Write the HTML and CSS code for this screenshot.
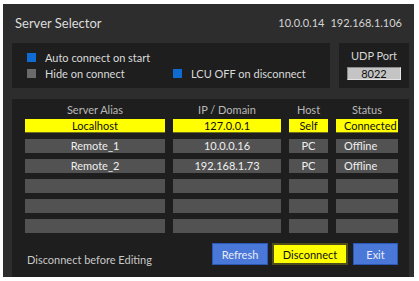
FILE: index.html
```html
<!DOCTYPE html>
<html lang="en">
<head>
    <meta charset="UTF-8">
    <title>Server Selector</title>
    <link rel="stylesheet" href="styles.css">
</head>
<body>
<div class="window">
    <div class="title-bar">
        <span class="title">Server Selector</span>
        <span class="local-ips"><span>10.0.0.14</span><span>192.168.1.106</span></span>
    </div>
    <div class="top-row">
        <div class="panel options">
            <div class="opt-line">
                <label class="check"><i class="box on"></i>Auto connect on start</label>
            </div>
            <div class="opt-line">
                <label class="check wide"><i class="box"></i>Hide on connect</label>
                <label class="check"><i class="box on"></i>LCU OFF on disconnect</label>
            </div>
        </div>
        <div class="panel udp">
            <div class="udp-label">UDP Port</div>
            <div class="udp-input">8022</div>
        </div>
    </div>
    <div class="panel servers">
        <div class="grid">
            <div class="head">Server Alias</div>
            <div class="head">IP / Domain</div>
            <div class="head">Host</div>
            <div class="head">Status</div>

            <div class="cell active">Localhost</div>
            <div class="cell active">127.0.0.1</div>
            <div class="cell active">Self</div>
            <div class="cell active status">Connected</div>

            <div class="cell">Remote_1</div>
            <div class="cell">10.0.0.16</div>
            <div class="cell">PC</div>
            <div class="cell status">Offline</div>

            <div class="cell">Remote_2</div>
            <div class="cell">192.168.1.73</div>
            <div class="cell">PC</div>
            <div class="cell status">Offline</div>

            <div class="cell"></div><div class="cell"></div><div class="cell"></div><div class="cell"></div>
            <div class="cell"></div><div class="cell"></div><div class="cell"></div><div class="cell"></div>
            <div class="cell"></div><div class="cell"></div><div class="cell"></div><div class="cell"></div>
        </div>
        <div class="footer">
            <span class="hint">Disconnect before Editing</span>
            <div class="buttons">
                <button class="btn refresh">Refresh</button>
                <button class="btn disconnect">Disconnect</button>
                <button class="btn exit">Exit</button>
            </div>
        </div>
    </div>
</div>
</body>
</html>
```

FILE: styles.css
```css
*{
    margin: 0;
    padding: 0;
    box-sizing: border-box;
}
body{
    background-color: #ffffff;
    padding: 4px 0 0 3px;
    font-family: Lato, "Noto Sans", sans-serif;
    font-size: 11px;
    color: #e6e6e6;
}
.window{
    width: 411px;
    height: 273px;
    background-color: #2d2d2d;
    display: flex;
    flex-direction: column;
}
.title-bar{
    height: 39px;
    display: flex;
    justify-content: space-between;
    align-items: center;
    padding: 0 12px 2px 12px;
}
.title{
    font-size: 13px;
    color: #dcdcdc;
}
.local-ips{
    display: flex;
    gap: 6px;
    font-size: 11px;
    color: #d4d4d4;
}
.panel{
    background-color: #1e1e1e;
}
.top-row{
    height: 45px;
    display: flex;
    gap: 9px;
    padding-left: 9px;
    padding-right: 5px;
}
.options{
    width: 318px;
    padding: 6px 0 0 15px;
}
.opt-line{
    display: flex;
    height: 16px;
    align-items: center;
}
.check{
    display: flex;
    align-items: center;
    gap: 9px;
    color: #dadada;
}
.check.wide{
    width: 146px;
}
.box{
    width: 9px;
    height: 9px;
    background-color: #6a6a6a;
}
.box.on{
    background-color: #0f6bd1;
}
.udp{
    width: 70px;
    display: flex;
    flex-direction: column;
    align-items: center;
    padding-top: 5px;
}
.udp-label{
    color: #d6d6d6;
    line-height: 16px;
    margin-bottom: 3px;
}
.udp-input{
    width: 54px;
    height: 13px;
    background-color: #c4c4c4;
    border: 1px solid #e4e4e4;
    border-top-color: #8a8a8a;
    border-left-color: #8a8a8a;
    color: #101010;
    text-align: center;
    line-height: 11px;
}
.servers{
    margin: 11px 5px 0 9px;
    flex: 1;
    padding: 0 11px 0 13px;
    display: flex;
    flex-direction: column;
}
.grid{
    display: grid;
    grid-template-columns: 140px 108px 39px 62px;
    grid-auto-rows: 14px;
    column-gap: 8px;
    row-gap: 6px;
}
.head{
    color: #b9b9b9;
    text-align: center;
    line-height: 14px;
    margin-top: 4px;
    height: 14px;
}
.cell{
    background-color: #525252;
    color: #efefef;
    text-align: center;
    line-height: 14px;
    white-space: nowrap;
}
.cell.status{
    text-align: left;
    padding-left: 8px;
}
.cell.active{
    background-color: #ffff00;
    color: #101010;
    border-bottom: 1px solid #6e6e1e;
    line-height: 13px;
}
.footer{
    display: flex;
    justify-content: space-between;
    align-items: flex-end;
    margin-top: 10px;
}
.hint{
    color: #c8c8c8;
    padding-left: 2px;
    line-height: 14px;
    margin-bottom: -2px;
}
.buttons{
    display: flex;
    gap: 4px;
}
.btn{
    height: 22px;
    font-family: inherit;
    font-size: 11px;
    border: 1px solid #2c58b8;
    background-color: #4a78d8;
    color: #e8ecf6;
}
.refresh{
    width: 56px;
}
.disconnect{
    width: 76px;
    background-color: #ffff00;
    border: 2px solid #4e4e1a;
    color: #101010;
}
.exit{
    width: 45px;
    margin-left: 1px;
}
```
